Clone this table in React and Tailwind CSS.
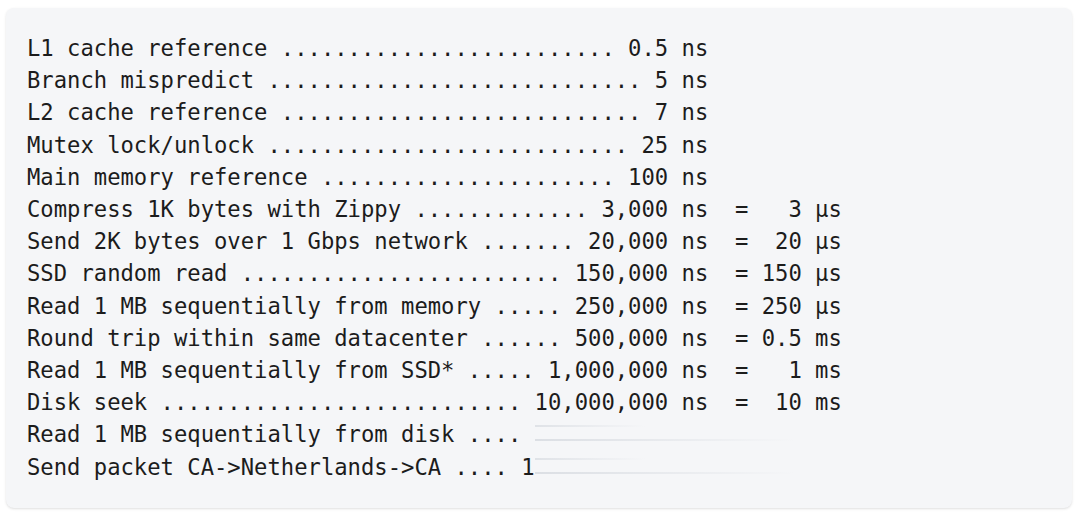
const ROWS = [
  'L1 cache reference ......................... 0.5 ns',
  'Branch mispredict ............................ 5 ns',
  'L2 cache reference ........................... 7 ns',
  'Mutex lock/unlock ........................... 25 ns',
  'Main memory reference ...................... 100 ns',
  'Compress 1K bytes with Zippy ............. 3,000 ns  =   3 µs',
  'Send 2K bytes over 1 Gbps network ....... 20,000 ns  =  20 µs',
  'SSD random read ........................ 150,000 ns  = 150 µs',
  'Read 1 MB sequentially from memory ..... 250,000 ns  = 250 µs',
  'Round trip within same datacenter ...... 500,000 ns  = 0.5 ms',
  'Read 1 MB sequentially from SSD* ..... 1,000,000 ns  =   1 ms',
  'Disk seek ........................... 10,000,000 ns  =  10 ms',
]

// the last two rows are smeared out past this column in the picture
const BLURRED = ['Read 1 MB sequentially from disk .... ', 'Send packet CA->Netherlands->CA .... 1']

function Smear() {
  return (
    <span className="relative inline-block h-[32.2px] w-[400px] align-top">
      <span className="absolute left-0 top-[7px] h-[2px] w-[110px] bg-gradient-to-r from-gray-300/60 to-transparent" />
      <span className="absolute left-0 top-[21px] h-[2px] w-[260px] bg-gradient-to-r from-gray-300/70 to-transparent" />
    </span>
  )
}

export default function App() {
  return (
    <div className="h-[516px] w-[1080px] bg-white p-[6px] pt-[8px]">
      <div className="h-[500px] w-[1066px] rounded-lg bg-[#f5f6f8] pl-[21px] pt-[24px] shadow-sm">
        <pre className="font-['DejaVu_Sans_Mono',monospace] text-[22.2px] leading-[32.2px] text-[#1c1c1c]">
          {ROWS.map((row) => (
            <div key={row}>{row}</div>
          ))}
          {BLURRED.map((row) => (
            <div key={row} className="flex">
              <span>{row}</span>
              <Smear />
            </div>
          ))}
        </pre>
      </div>
    </div>
  )
}
